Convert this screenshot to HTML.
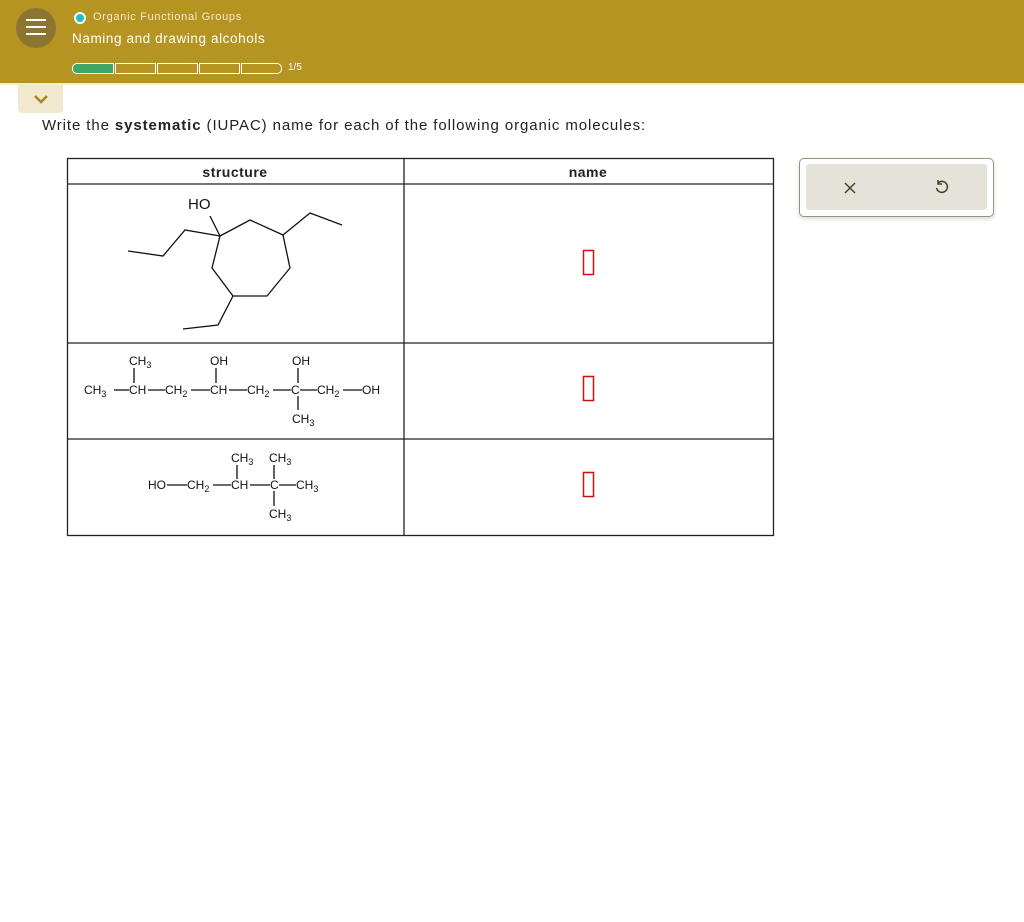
<!DOCTYPE html>
<html><head><meta charset="utf-8"><style>
body{margin:0;width:1024px;height:922px;background:#fff;font-family:"Liberation Sans",sans-serif;position:relative;overflow:hidden}
.hdr{position:absolute;left:0;top:0;width:1024px;height:83px;background:#b59422;border-bottom:2px solid #f3ecd0}
.abs{position:absolute}
</style></head><body>
<div class="hdr"></div>
<div class="abs" style="left:16px;top:8px;width:40px;height:40px;border-radius:50%;background:#8c7432"></div>
<div class="abs" style="left:26px;top:19px;width:20px;height:2px;background:#fff;box-shadow:0 7px 0 #fff,0 14px 0 #fff"></div>
<div class="abs" style="left:74px;top:12px;border:2px solid #fff;border-radius:50%;background:#1fc0c0;width:8px;height:8px"></div>
<div class="abs" style="left:93px;top:11px;font-size:11px;color:#f3ead0;letter-spacing:0.7px">Organic Functional Groups</div>
<div class="abs" style="left:72px;top:31px;font-size:13.5px;color:#fff;letter-spacing:0.6px">Naming and drawing alcohols</div>
<div class="abs" style="left:72px;top:63px;width:40px;height:9px;border:1px solid #fff;border-radius:5px 0 0 5px;background:#3fa766"></div>
<div class="abs" style="left:115px;top:63px;width:39px;height:9px;border:1px solid #fff"></div>
<div class="abs" style="left:157px;top:63px;width:39px;height:9px;border:1px solid #fff"></div>
<div class="abs" style="left:199px;top:63px;width:39px;height:9px;border:1px solid #fff"></div>
<div class="abs" style="left:241px;top:63px;width:39px;height:9px;border:1px solid #fff;border-radius:0 5px 5px 0"></div>
<div class="abs" style="left:288px;top:62px;font-size:10px;color:#fff">1/5</div>
<div class="abs" style="left:18px;top:85px;width:45px;height:28px;background:#f1e9cf;border-radius:0 0 4px 4px"></div>
<svg class="abs" style="left:32px;top:93px" width="18" height="12"><path d="M3 3 L9 9 L15 3" fill="none" stroke="#a48420" stroke-width="2.5"/></svg>
<div class="abs" style="left:42px;top:117px;font-size:15px;color:#222;letter-spacing:0.9px">Write the <b>systematic</b> (IUPAC) name for each of the following organic molecules:</div>

<svg class="abs" style="left:0;top:0" width="1024" height="560" font-family="Liberation Sans, sans-serif" font-size="12" fill="#111">
<g stroke="#222" stroke-width="1.3" fill="none">
<rect x="67.5" y="158.5" width="706" height="377"/>
<line x1="404" y1="158" x2="404" y2="536"/>
<line x1="67" y1="184" x2="774" y2="184"/>
<line x1="67" y1="343" x2="774" y2="343"/>
<line x1="67" y1="439" x2="774" y2="439"/>
</g>
<text x="235" y="177" text-anchor="middle" font-weight="bold" font-size="14" fill="#222" letter-spacing="0.5">structure</text>
<text x="588" y="177" text-anchor="middle" font-weight="bold" font-size="14" fill="#222" letter-spacing="0.5">name</text>
<g stroke="#d01010" stroke-width="1.5" fill="none">
<rect x="583.5" y="250.5" width="10" height="24"/>
<rect x="583.5" y="376.5" width="10" height="24"/>
<rect x="583.5" y="472.5" width="10" height="24"/>
</g>
<g stroke="#111" stroke-width="1.3" fill="none">
<polygon points="220,236 250,220 283,235 290,268 267,296 233,296 212,268"/>
<polyline points="210,216 220,236"/>
<polyline points="220,236 185,230 163,256 128,251"/>
<polyline points="283,235 310,213 342,225"/>
<polyline points="233,296 218,325 183,329"/>
<line x1="134" y1="368" x2="134" y2="383"/><line x1="216" y1="368" x2="216" y2="383"/>
<line x1="298" y1="368" x2="298" y2="383"/><line x1="298" y1="396" x2="298" y2="410"/>
<line x1="114" y1="390" x2="129" y2="390"/><line x1="148" y1="390" x2="165" y2="390"/>
<line x1="191" y1="390" x2="210" y2="390"/><line x1="229" y1="390" x2="247" y2="390"/>
<line x1="273" y1="390" x2="291" y2="390"/><line x1="300" y1="390" x2="317" y2="390"/>
<line x1="343" y1="390" x2="362" y2="390"/>
<line x1="237" y1="465" x2="237" y2="479"/><line x1="274" y1="465" x2="274" y2="479"/><line x1="274" y1="491" x2="274" y2="506"/>
<line x1="167" y1="485" x2="187" y2="485"/><line x1="213" y1="485" x2="231" y2="485"/>
<line x1="250" y1="485" x2="270" y2="485"/><line x1="279" y1="485" x2="296" y2="485"/>
</g>
<text x="188" y="209" font-size="15">HO</text>
<text x="129" y="365">CH<tspan font-size="9" dy="3">3</tspan></text>
<text x="210" y="365">OH</text><text x="292" y="365">OH</text>
<text x="84" y="394">CH<tspan font-size="9" dy="3">3</tspan></text>
<text x="129" y="394">CH</text>
<text x="165" y="394">CH<tspan font-size="9" dy="3">2</tspan></text>
<text x="210" y="394">CH</text>
<text x="247" y="394">CH<tspan font-size="9" dy="3">2</tspan></text>
<text x="291" y="394">C</text>
<text x="317" y="394">CH<tspan font-size="9" dy="3">2</tspan></text>
<text x="362" y="394">OH</text>
<text x="292" y="423">CH<tspan font-size="9" dy="3">3</tspan></text>
<text x="231" y="462">CH<tspan font-size="9" dy="3">3</tspan></text>
<text x="269" y="462">CH<tspan font-size="9" dy="3">3</tspan></text>
<text x="148" y="489">HO</text>
<text x="187" y="489">CH<tspan font-size="9" dy="3">2</tspan></text>
<text x="231" y="489">CH</text>
<text x="270" y="489">C</text>
<text x="296" y="489">CH<tspan font-size="9" dy="3">3</tspan></text>
<text x="269" y="518">CH<tspan font-size="9" dy="3">3</tspan></text>
</svg>

<div class="abs" style="left:799px;top:158px;width:193px;height:57px;border:1px solid #9a9278;border-radius:5px;box-shadow:0 2px 4px rgba(0,0,0,.15);background:#fff"></div>
<div class="abs" style="left:806px;top:164px;width:181px;height:46px;background:#e5e2da;border-radius:3px"></div>
<svg class="abs" style="left:843px;top:181px" width="14" height="14"><path d="M2 2 L12 12 M12 2 L2 12" stroke="#4a3f26" stroke-width="1.5"/></svg>
<svg class="abs" style="left:933px;top:179px" width="16" height="18"><path d="M5 4 A5.5 5.5 0 1 1 3.5 9" fill="none" stroke="#4a3f26" stroke-width="1.5"/><path d="M5 1 L5 5 L9 5" fill="none" stroke="#4a3f26" stroke-width="1.5"/></svg>
</body></html>
